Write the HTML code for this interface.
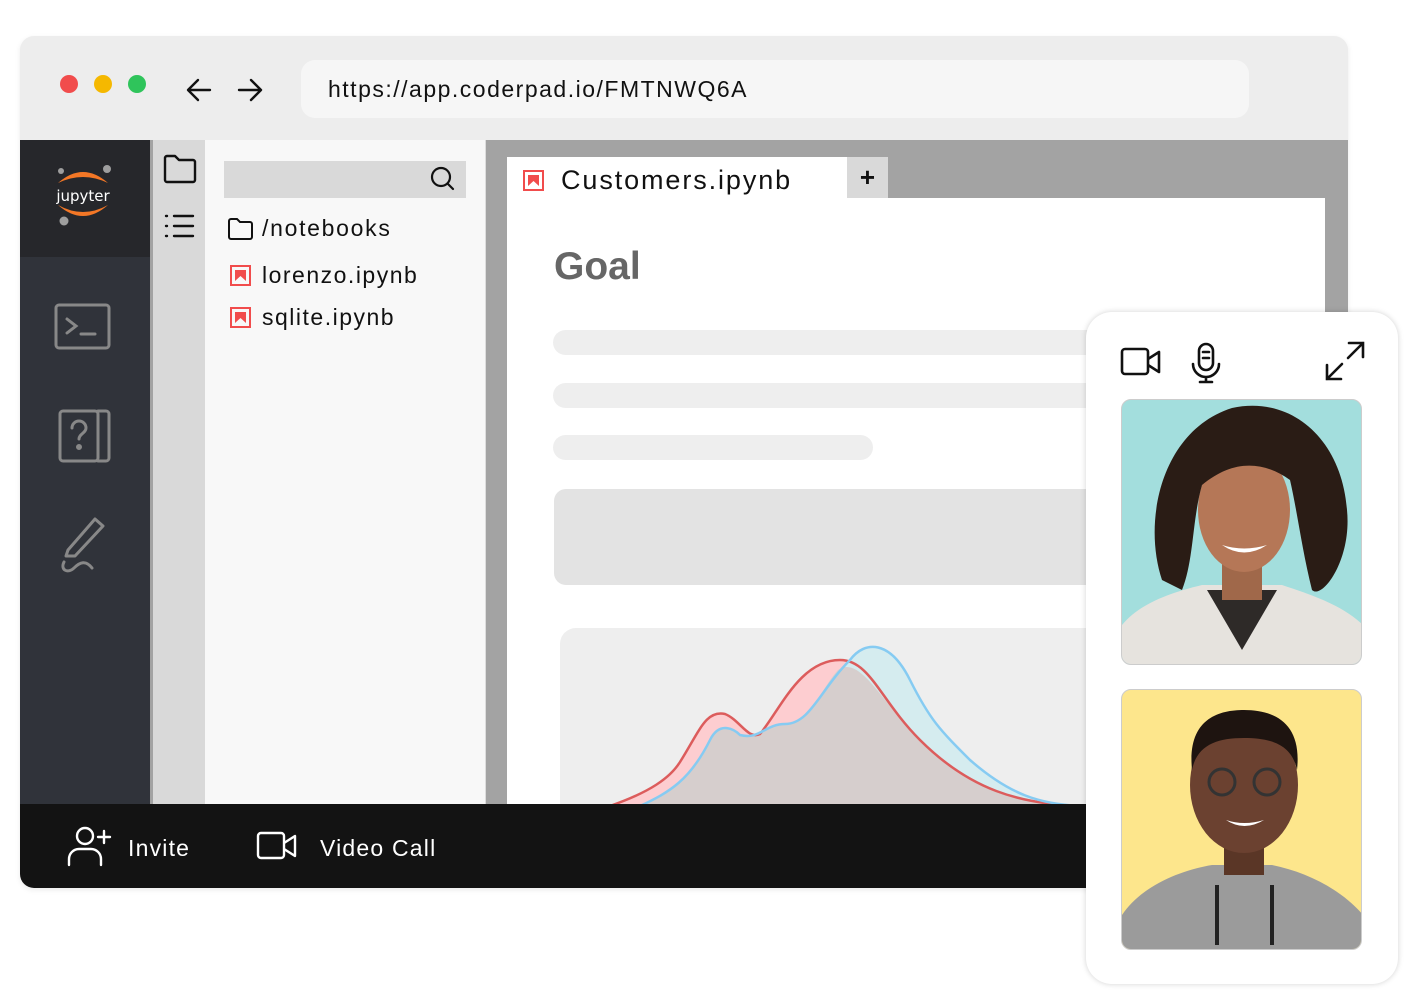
<!DOCTYPE html>
<html><head><style>
*{margin:0;padding:0;box-sizing:border-box}
body{width:1408px;height:996px;background:#fff;position:relative;overflow:hidden;font-family:"Liberation Sans",sans-serif}
.a{position:absolute}
</style></head><body>
<div class="a" style="left:20px;top:36px;width:1328px;height:852px;border-radius:14px;overflow:hidden;background:#ededed;box-shadow:0 2px 6px rgba(0,0,0,.08)">
 <div class="a" style="left:40px;top:39px;width:18px;height:18px;border-radius:50%;background:#f14c4c"></div>
 <div class="a" style="left:74px;top:39px;width:18px;height:18px;border-radius:50%;background:#f5b800"></div>
 <div class="a" style="left:108px;top:39px;width:18px;height:18px;border-radius:50%;background:#2fc45b"></div>
 <svg class="a" style="left:166px;top:40px" width="80" height="30" viewBox="0 0 80 30" fill="none" stroke="#111" stroke-width="2.4" stroke-linecap="round" stroke-linejoin="round"><path d="M24 14H3M12 4L2 14l10 10"/><path d="M53 14h21M65 4l10 10-10 10"/></svg>
 <div class="a" style="left:281px;top:24px;width:948px;height:58px;border-radius:14px;background:#f6f6f6;font-size:23px;line-height:58px;padding-left:27px;color:#111;letter-spacing:1.5px">https://app.coderpad.io/FMTNWQ6A</div>
 <div class="a" style="left:0;top:104px;width:130px;height:664px;background:#30333a"></div>
 <div class="a" style="left:0;top:104px;width:130px;height:117px;background:#26272b"></div>
 <svg class="a" style="left:30px;top:125px" width="70" height="70" viewBox="0 0 70 70"><path d="M8 22 Q33 0 58 22 Q33 10 8 22Z" fill="#f37726"/><path d="M8 44 Q33 66 58 44 Q33 58 8 44Z" fill="#f37726"/><circle cx="57" cy="8" r="4" fill="#9e9e9e"/><circle cx="11" cy="10" r="3" fill="#9e9e9e"/><circle cx="14" cy="60" r="4.5" fill="#9e9e9e"/><text x="33" y="40" text-anchor="middle" font-size="15" fill="#fff" font-family="DejaVu Sans">jupyter</text></svg>
 <svg class="a" style="left:34px;top:266px" width="60" height="50" viewBox="0 0 60 50" fill="none" stroke="#888" stroke-width="3" stroke-linecap="round"><rect x="2" y="3" width="53" height="43" rx="3"/><path d="M13 17l9 7-9 7M27 32h14"/></svg>
 <svg class="a" style="left:37px;top:372px" width="56" height="56" viewBox="0 0 56 56" fill="none" stroke="#888" stroke-width="3" stroke-linecap="round"><rect x="3" y="3" width="38" height="50" rx="3"/><path d="M41 3h8a3 3 0 013 3v44a3 3 0 01-3 3h-8"/><path d="M15 20a7 7 0 1114 0c0 5-7 6-7 11"/><circle cx="22" cy="39" r="1.5" fill="#888"/></svg>
 <svg class="a" style="left:40px;top:478px" width="50" height="64" viewBox="0 0 50 64" fill="none" stroke="#888" stroke-width="3" stroke-linecap="round" stroke-linejoin="round"><path d="M8 36L35 5l8 7-28 30H6z"/><path d="M4 48c-4 8 4 12 10 6s12-8 18 0"/></svg>
 <div class="a" style="left:130px;top:104px;width:56px;height:664px;background:#d9d9d9;border-left:3px solid #a3a3a3"></div>
 <svg class="a" style="left:143px;top:118px" width="34" height="30" viewBox="0 0 34 30" fill="none" stroke="#111" stroke-width="2.4" stroke-linejoin="round"><path d="M2 4a2 2 0 012-2h8l4 4h14a2 2 0 012 2v18a2 2 0 01-2 2H4a2 2 0 01-2-2z"/></svg>
 <svg class="a" style="left:144px;top:178px" width="32" height="24" viewBox="0 0 32 24" stroke="#111" stroke-width="2.4" stroke-linecap="round"><path d="M2 2h1M10 2h19M2 12h1M10 12h19M2 22h1M10 22h19"/></svg>
 <div class="a" style="left:185px;top:104px;width:281px;height:664px;background:#f8f8f8;border-right:1px solid #ddd"></div>
 <div class="a" style="left:204px;top:125px;width:242px;height:37px;background:#d9d9d9"></div>
 <svg class="a" style="left:410px;top:130px" width="26" height="26" viewBox="0 0 26 26" fill="none" stroke="#111" stroke-width="2.2" stroke-linecap="round"><circle cx="11" cy="11" r="9"/><path d="M18 18l5 5"/></svg>
 <svg class="a" style="left:208px;top:182px" width="26" height="22" viewBox="0 0 26 22" fill="none" stroke="#111" stroke-width="2"><path d="M1 3a2 2 0 012-2h6l3 3h10a2 2 0 012 2v13a2 2 0 01-2 2H3a2 2 0 01-2-2z"/></svg>
 <div class="a" style="left:242px;top:179px;font-size:23px;color:#111;letter-spacing:1.7px">/notebooks</div>
 <svg class="a" style="left:210px;top:229px" width="22" height="22"><rect x="1" y="1" width="19" height="19" fill="none" stroke="#f14c4c" stroke-width="2"/><path d="M5 5h11v11l-5.5-5-5.5 5z" fill="#f14c4c"/></svg>
 <div class="a" style="left:242px;top:226px;font-size:23px;color:#111;letter-spacing:1.5px">lorenzo.ipynb</div>
 <svg class="a" style="left:210px;top:271px" width="22" height="22"><rect x="1" y="1" width="19" height="19" fill="none" stroke="#f14c4c" stroke-width="2"/><path d="M5 5h11v11l-5.5-5-5.5 5z" fill="#f14c4c"/></svg>
 <div class="a" style="left:242px;top:268px;font-size:23px;color:#111;letter-spacing:1.5px">sqlite.ipynb</div>
 <div class="a" style="left:466px;top:104px;width:862px;height:664px;background:#a3a3a3"></div>
 <div class="a" style="left:487px;top:121px;width:340px;height:42px;background:#fff"></div>
 <svg class="a" style="left:503px;top:134px" width="22" height="22"><rect x="1" y="1" width="19" height="19" fill="none" stroke="#f14c4c" stroke-width="2"/><path d="M5 5h11v11l-5.5-5-5.5 5z" fill="#f14c4c"/></svg>
 <div class="a" style="left:541px;top:129px;font-size:27px;color:#111;letter-spacing:1.9px">Customers.ipynb</div>
 <div class="a" style="left:827px;top:121px;width:41px;height:41px;background:#d9d9d9;text-align:center;font-size:26px;line-height:41px;font-weight:bold;color:#111">+</div>
 <div class="a" style="left:487px;top:162px;width:818px;height:606px;background:#fff"></div>
 <div class="a" style="left:534px;top:209px;font-size:39px;color:#666;font-weight:bold">Goal</div>
 <div class="a" style="left:533px;top:294px;width:560px;height:25px;border-radius:13px;background:#eee"></div>
 <div class="a" style="left:533px;top:347px;width:560px;height:25px;border-radius:13px;background:#eee"></div>
 <div class="a" style="left:533px;top:399px;width:320px;height:25px;border-radius:13px;background:#eee"></div>
 <div class="a" style="left:534px;top:453px;width:560px;height:96px;border-radius:12px;background:#e3e3e3"></div>
 <div class="a" style="left:540px;top:592px;width:560px;height:190px;border-radius:16px;background:#eee"></div>
 <svg class="a" style="left:500px;top:564px" width="620" height="210" viewBox="0 0 620 210">
  <path d="M90 206C130 192 150 178 160 162C180 130 186 110 205 114C220 120 228 140 240 134C260 110 280 60 320 60C350 60 360 100 400 140C450 190 500 204 560 206Z" fill="#fdcdd0"/>
  <path d="M120 206C150 192 170 180 190 140C200 120 215 130 220 135C240 140 245 124 265 124C290 124 300 90 330 60C345 40 370 40 390 80C410 120 420 130 450 160C490 195 520 204 560 206Z" fill="#d5ecef"/>
  <path d="M120 206C150 192 170 180 190 140C200 120 215 130 220 135C240 140 245 124 265 124C290 124 300 90 318 70C340 55 360 100 400 140C450 190 500 204 560 206Z" fill="#d6cecd"/>
  <path d="M90 206C130 192 150 178 160 162C180 130 186 110 205 114C220 120 228 140 240 134C260 110 280 60 320 60C350 60 360 100 400 140C450 190 500 204 560 206" fill="none" stroke="#dc5c5c" stroke-width="2.5"/>
  <path d="M120 206C150 192 170 180 190 140C200 120 215 130 220 135C240 140 245 124 265 124C290 124 300 90 330 60C345 40 370 40 390 80C410 120 420 130 450 160C490 195 520 204 560 206" fill="none" stroke="#86cbf2" stroke-width="2.5"/>
 </svg>
 <div class="a" style="left:0;top:768px;width:1328px;height:84px;background:#131313"></div>
 <svg class="a" style="left:46px;top:789px" width="46" height="42" viewBox="0 0 46 42" fill="none" stroke="#fff" stroke-width="2.4" stroke-linecap="round"><circle cx="19" cy="11" r="8"/><path d="M3 40v-6a10 10 0 0110-10h12a10 10 0 0110 10v6M38 6v12M32 12h12"/></svg>
 <div class="a" style="left:108px;top:799px;font-size:23px;color:#fff;letter-spacing:1.2px">Invite</div>
 <svg class="a" style="left:236px;top:795px" width="42" height="30" viewBox="0 0 42 30" fill="none" stroke="#fff" stroke-width="2.4" stroke-linejoin="round"><rect x="2" y="2" width="26" height="25" rx="3"/><path d="M28 12l11-7v20l-11-7"/></svg>
 <div class="a" style="left:300px;top:799px;font-size:23px;color:#fff;letter-spacing:1.2px">Video Call</div>
</div>
<div class="a" style="left:1086px;top:312px;width:312px;height:672px;border-radius:26px;background:#fff;box-shadow:0 0 6px rgba(0,0,0,.18)">
 <svg class="a" style="left:34px;top:34px" width="42" height="32" viewBox="0 0 42 32" fill="none" stroke="#111" stroke-width="2.6" stroke-linejoin="round"><rect x="2" y="3" width="26" height="25" rx="3"/><path d="M28 13l11-7v20l-11-7"/></svg>
 <svg class="a" style="left:104px;top:30px" width="32" height="42" viewBox="0 0 32 42" fill="none" stroke="#111" stroke-width="2.6" stroke-linecap="round"><rect x="9" y="2" width="14" height="26" rx="7"/><path d="M3 22a13 13 0 0026 0M16 35v5M10 40h12M13 10h6M13 16h6"/></svg>
 <svg class="a" style="left:238px;top:28px" width="42" height="42" viewBox="0 0 42 42" fill="none" stroke="#111" stroke-width="2.6" stroke-linecap="round"><path d="M25 3h14v14M39 3L24 18M17 39H3V25M3 39l15-15"/></svg>
 <div class="a" style="left:35px;top:87px;width:241px;height:266px;border-radius:10px;overflow:hidden;background:#a3dedd;border:1px solid #ccc">
  <svg width="241" height="266" viewBox="0 0 241 266"><path d="M0 266V225C20 200 60 190 80 185L160 185C190 195 220 205 241 225V266Z" fill="#e6e3de"/><path d="M85 190L120 250L155 190Z" fill="#2e2a28"/><rect x="100" y="150" width="40" height="50" fill="#a0684a"/><ellipse cx="122" cy="110" rx="46" ry="62" fill="#b57757"/><path d="M40 180C20 120 40 30 110 8C170 -5 220 40 225 110C230 160 200 200 190 190C180 150 175 110 168 80C140 60 110 60 80 85C70 120 72 160 60 190Z" fill="#2a1c15"/><path d="M100 145Q122 160 145 145Q122 152 100 145Z" fill="#fff"/></svg>
 </div>
 <div class="a" style="left:35px;top:377px;width:241px;height:261px;border-radius:10px;overflow:hidden;background:#fde68c;border:1px solid #ccc">
  <svg width="241" height="261" viewBox="0 0 241 261"><path d="M0 261V225C20 195 60 180 90 175L150 175C185 182 220 200 241 225V261Z" fill="#9b9b9b"/><rect x="102" y="140" width="40" height="45" fill="#5a3626"/><ellipse cx="122" cy="95" rx="54" ry="68" fill="#6b4130"/><path d="M70 80C65 30 95 20 122 20C155 20 180 35 175 80C170 55 150 48 122 48C95 48 75 55 70 80Z" fill="#1e1410"/><circle cx="100" cy="92" r="13" fill="none" stroke="#333" stroke-width="3"/><circle cx="145" cy="92" r="13" fill="none" stroke="#333" stroke-width="3"/><path d="M104 130Q122 142 142 130Q122 136 104 130Z" fill="#fff"/><path d="M95 195v60M150 195v60" stroke="#222" stroke-width="4"/></svg>
 </div>
</div>
</body></html>
